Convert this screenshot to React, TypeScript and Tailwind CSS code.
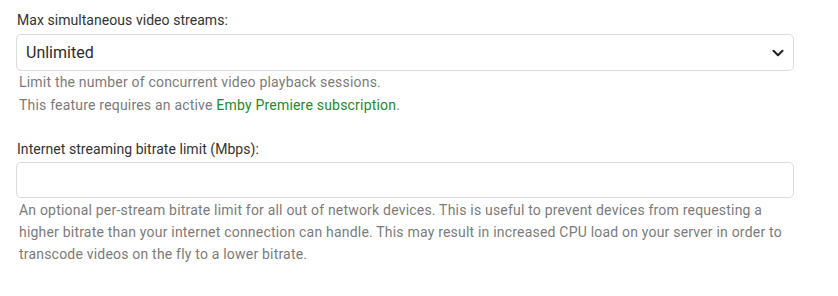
import { ChevronDown } from "lucide-react";

export default function App() {
  return (
    <div
      className="w-[838px] h-[296px] bg-white pl-4 pr-[44px] pt-[10px]"
      style={{ fontFamily: "Roboto, 'Liberation Sans', sans-serif" }}
    >
      <div>
        <label className="block text-[14px] leading-[20px] tracking-[0.05px] text-[#333] pl-px mb-1">
          Max simultaneous video streams:
        </label>
        <div className="relative h-[37px] border border-[#dcdcdc] rounded-[5px] flex items-center pl-[9px]">
          <span className="text-[16px] text-[#2a2a2a]">Unlimited</span>
          <ChevronDown className="absolute right-[6px] w-[18px] h-[18px] text-[#222]" strokeWidth={2.8} />
        </div>
        <div className="text-[14px] leading-[22px] tracking-[0.2px] text-[#7b7b7b] pl-[3px]">
          <div>Limit the number of concurrent video playback sessions.</div>
          <div className="mt-px">
            This feature requires an active{" "}
            <span className="text-[#1e8a2a]">Emby Premiere subscription</span>.
          </div>
        </div>
      </div>

      <div className="mt-[23px]">
        <label className="block text-[14px] leading-[20px] tracking-[0.05px] text-[#333] pl-px mb-[3px]">
          Internet streaming bitrate limit (Mbps):
        </label>
        <input className="block w-full h-[36px] border border-[#dcdcdc] rounded-[5px] outline-none" />
        <div className="text-[14px] leading-[22px] tracking-[0.2px] text-[#7b7b7b] pl-[3px] pt-px">
          An optional per-stream bitrate limit for all out of network devices. This is useful to prevent devices from
          requesting a higher bitrate than your internet connection can handle. This may result in increased CPU load
          on your server in order to transcode videos on the fly to a lower bitrate.
        </div>
      </div>
    </div>
  );
}
